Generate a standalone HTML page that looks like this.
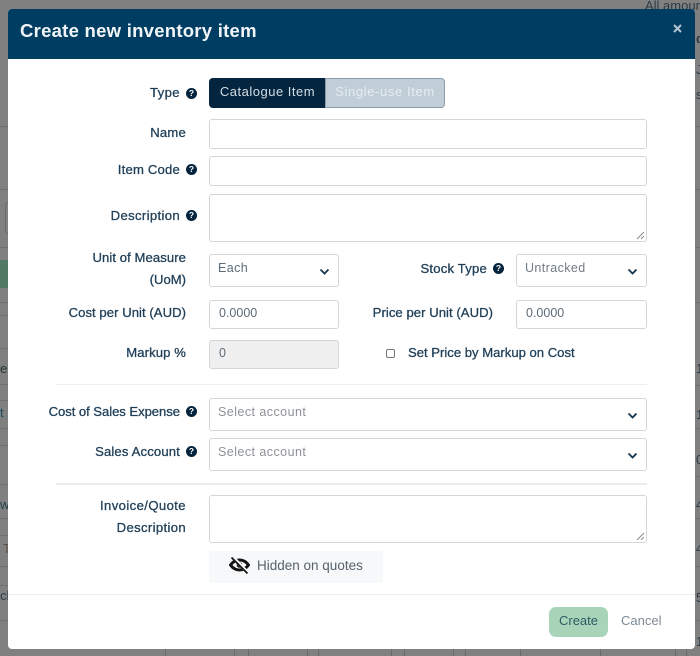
<!DOCTYPE html>
<html><head><meta charset="utf-8"><style>
html,body{margin:0;padding:0}
body{width:700px;height:656px;position:relative;overflow:hidden;background:#808080;font-family:"Liberation Sans",sans-serif;color:#1d3c55}
.a{position:absolute}
.bgl{position:absolute;height:1px;background:#6f6f6f}
.bgv{position:absolute;width:1px;background:#6a6a6a;top:649px;height:7px}
.bgt{position:absolute;font-size:13px;color:#2c3a45;white-space:nowrap}
#m{position:absolute;left:8px;top:9px;width:687px;height:640px;background:#fff;border-radius:4px;overflow:hidden}
#h{position:absolute;left:8px;top:9px;width:687px;height:50px;background:#003d63;border-radius:4px 4px 0 0}
.l{position:absolute;font-size:13.1px;line-height:21px;font-weight:400;color:#1f3f58;text-align:right;white-space:nowrap;-webkit-text-stroke:.3px #1f3f58}
.q{position:absolute;width:11px;height:11px;border-radius:50%;background:#04243d;color:#fff;font-size:8.500px;line-height:11px;font-weight:700;text-align:center}
.i{position:absolute;box-sizing:border-box;background:#fff;border:1px solid #d3d5d7;border-bottom-width:1.500px;border-radius:3px;font-size:12.500px;color:#5b6b78;white-space:nowrap}
.ph{color:#8e9296;letter-spacing:.45px}
.hr{position:absolute;height:1px;background:#ececec}
.g{position:absolute;right:1px;bottom:1px}
</style></head><body>
<div class="bgl" style="left:0;top:126px;width:8px"></div>
<div class="bgl" style="left:0;top:189px;width:8px"></div>
<div class="bgl" style="left:0;top:247px;width:8px"></div>
<div class="bgl" style="left:0;top:302px;width:8px"></div>
<div class="bgl" style="left:0;top:315px;width:8px"></div>
<div class="bgl" style="left:0;top:348px;width:8px"></div>
<div class="bgl" style="left:0;top:384px;width:8px"></div>
<div class="bgl" style="left:0;top:400px;width:8px"></div>
<div class="bgl" style="left:0;top:428px;width:8px"></div>
<div class="bgl" style="left:0;top:445px;width:8px"></div>
<div class="bgl" style="left:0;top:484px;width:8px"></div>
<div class="bgl" style="left:0;top:518px;width:8px"></div>
<div class="bgl" style="left:0;top:535px;width:8px"></div>
<div class="bgl" style="left:0;top:566px;width:8px"></div>
<div class="bgl" style="left:0;top:585px;width:8px"></div>
<div class="bgl" style="left:0;top:620px;width:8px"></div>
<div class="bgl" style="left:695px;top:126px;width:5px"></div>
<div class="bgl" style="left:695px;top:189px;width:5px"></div>
<div class="bgl" style="left:695px;top:247px;width:5px"></div>
<div class="bgl" style="left:695px;top:302px;width:5px"></div>
<div class="bgl" style="left:695px;top:385px;width:5px"></div>
<div class="bgl" style="left:695px;top:428px;width:5px"></div>
<div class="bgl" style="left:695px;top:476px;width:5px"></div>
<div class="bgl" style="left:695px;top:518px;width:5px"></div>
<div class="bgl" style="left:695px;top:566px;width:5px"></div>
<div class="bgl" style="left:695px;top:620px;width:5px"></div>
<div class="a" style="left:0;top:260px;width:8px;height:28px;background:#527a64"></div>
<div class="a" style="left:5px;top:202px;width:3px;height:32px;border:1px solid #6b6b6b;border-right:0;border-radius:3px 0 0 3px;box-sizing:border-box"></div>
<div class="bgt" style="left:0;top:361px;color:#233">e</div>
<div class="bgt" style="left:0;top:405px;color:#1d4a66">t</div>
<div class="bgt" style="left:0;top:497px;color:#24404f">w</div>
<div class="bgt" style="left:3px;top:541px;color:#5e5048">T</div>
<div class="bgt" style="left:0;top:588px">ch</div>
<div class="bgt" style="left:645px;top:-2px">All amoun</div>
<div class="bgt" style="left:696px;top:31px;font-weight:700">d</div>
<div class="bgt" style="left:696px;top:62px">J</div>
<div class="bgt" style="left:696px;top:87px">s</div>
<div class="bgt" style="left:696px;top:361px">1</div>
<div class="bgt" style="left:696px;top:407px">1</div>
<div class="bgt" style="left:696px;top:452px">0</div>
<div class="bgt" style="left:696px;top:497px">4</div>
<div class="bgt" style="left:696px;top:541px">4</div>
<div class="bgt" style="left:696px;top:590px">5</div>
<div class="bgt" style="left:696px;top:634px">1</div>
<div class="bgv" style="left:165px"></div><div class="bgv" style="left:234px"></div><div class="bgv" style="left:248px"></div><div class="bgv" style="left:307px"></div><div class="bgv" style="left:318px"></div><div class="bgv" style="left:391px"></div><div class="bgv" style="left:404px"></div><div class="bgv" style="left:453px"></div><div class="bgv" style="left:465px"></div><div class="bgv" style="left:520px"></div><div class="bgv" style="left:600px"></div><div class="bgv" style="left:675px"></div><div class="bgv" style="left:686px"></div>

<div id="m"></div>
<div id="h"></div>
<div class="a" style="left:20px;top:19px;font-size:18.500px;line-height:24px;font-weight:700;color:#f2f5f7;letter-spacing:.26px;white-space:nowrap">Create new inventory item</div>
<svg class="a" style="left:673px;top:24px" width="9" height="9" viewBox="0 0 9 9"><path d="M1 1L8 8M8 1L1 8" stroke="#b5c6d2" stroke-width="2"/></svg>

<div class="l" style="right:520px;top:82px;letter-spacing:.4px">Type</div><div class="q" style="left:186px;top:88px">?</div>
<div class="a" style="left:209px;top:78px;width:117px;height:30px;background:#04253f;border-radius:4px 0 0 4px;color:#d4dee5;font-size:13px;line-height:27px;text-align:center;letter-spacing:.5px">Catalogue Item</div>
<div class="a" style="left:325px;top:78px;width:120px;height:30px;box-sizing:border-box;background:#c0ced8;border:1px solid #8b9aa6;border-radius:0 4px 4px 0;color:#e6edf1;font-size:13px;line-height:25px;text-align:center;letter-spacing:.62px">Single-use Item</div>

<div class="l" style="right:514px;top:122px;letter-spacing:.2px">Name</div>
<div class="i" style="left:209px;top:119px;width:438px;height:30px"></div>

<div class="l" style="right:520px;top:159px;letter-spacing:.2px">Item Code</div><div class="q" style="left:186px;top:164px">?</div>
<div class="i" style="left:209px;top:156px;width:438px;height:30px"></div>

<div class="l" style="right:520px;top:205px;letter-spacing:.35px">Description</div><div class="q" style="left:186px;top:210px">?</div>
<div class="i" style="left:209px;top:194px;width:438px;height:48px"><svg class="g" width="9" height="9" viewBox="0 0 9 9"><path d="M1 8L8 1M5 8L8 5" stroke="#8a8a8a" stroke-width="1"/></svg></div>

<div class="l" style="right:514px;top:247px;letter-spacing:.07px">Unit of Measure</div>
<div class="l" style="right:514px;top:269px">(UoM)</div>
<div class="i" style="left:209px;top:254px;width:130px;height:33px;padding:3px 8px;line-height:20px;letter-spacing:.4px">Each<svg class="a" style="right:8px;top:13px" width="11" height="8" viewBox="0 0 11 8"><path d="M1.500 1.500L5.500 5.500L9.500 1.500" fill="none" stroke="#1c3b52" stroke-width="1.900"/></svg></div>

<div class="l" style="right:213px;top:258px;letter-spacing:.2px">Stock Type</div><div class="q" style="left:493px;top:263px">?</div>
<div class="i" style="left:516px;top:254px;width:131px;height:33px;padding:3px 8px;line-height:20px;color:#717c85;letter-spacing:.4px">Untracked<svg class="a" style="right:8px;top:13px" width="11" height="8" viewBox="0 0 11 8"><path d="M1.500 1.500L5.500 5.500L9.500 1.500" fill="none" stroke="#1c3b52" stroke-width="1.900"/></svg></div>

<div class="l" style="right:514px;top:302px;letter-spacing:.05px">Cost per Unit (AUD)</div>
<div class="i" style="left:209px;top:300px;width:130px;height:29px;padding:0 9px;line-height:25px">0.0000</div>
<div class="l" style="right:207px;top:302px;letter-spacing:.05px">Price per Unit (AUD)</div>
<div class="i" style="left:516px;top:300px;width:131px;height:29px;padding:0 9px;line-height:25px">0.0000</div>

<div class="l" style="right:514px;top:342px;letter-spacing:.1px">Markup %</div>
<div class="i" style="left:209px;top:340px;width:130px;height:29px;padding:0 9px;line-height:25px;background:#f0f0f0">0</div>
<div class="a" style="left:386px;top:349px;width:9px;height:9px;box-sizing:border-box;border:1px solid #767676;border-radius:2px;background:#fff"></div>
<div class="l" style="left:408px;top:342px;text-align:left">Set Price by Markup on Cost</div>

<div class="hr" style="left:56px;top:384px;width:591px"></div>

<div class="l" style="right:520px;top:401px;letter-spacing:-.05px">Cost of Sales Expense</div><div class="q" style="left:186px;top:406px">?</div>
<div class="i" style="left:209px;top:398px;width:438px;height:33px;padding:2px 8px;line-height:22px"><span class="ph">Select account</span><svg class="a" style="right:8px;top:13px" width="11" height="8" viewBox="0 0 11 8"><path d="M1.500 1.500L5.500 5.500L9.500 1.500" fill="none" stroke="#1c3b52" stroke-width="1.900"/></svg></div>

<div class="l" style="right:520px;top:441px;letter-spacing:.15px">Sales Account</div><div class="q" style="left:186px;top:446px">?</div>
<div class="i" style="left:209px;top:438px;width:438px;height:33px;padding:2px 8px;line-height:22px"><span class="ph">Select account</span><svg class="a" style="right:8px;top:13px" width="11" height="8" viewBox="0 0 11 8"><path d="M1.500 1.500L5.500 5.500L9.500 1.500" fill="none" stroke="#1c3b52" stroke-width="1.900"/></svg></div>

<div class="hr" style="left:56px;top:483px;width:591px;height:1.500px"></div>

<div class="l" style="right:514px;top:495px;letter-spacing:.4px">Invoice/Quote</div>
<div class="l" style="right:514px;top:517px;letter-spacing:.35px">Description</div>
<div class="i" style="left:209px;top:495px;width:438px;height:48px"><svg class="g" width="9" height="9" viewBox="0 0 9 9"><path d="M1 8L8 1M5 8L8 5" stroke="#8a8a8a" stroke-width="1"/></svg></div>

<div class="a" style="left:209px;top:551px;width:174px;height:32px;background:#f6f8fa;border-radius:3px"></div>
<svg class="a" style="left:229px;top:556px" width="21" height="19" viewBox="0 0 21 19"><path d="M1.500 9C4 5.500 7 4 10.500 4S17 5.500 19.500 9C17 12.500 14 14 10.500 14S4 12.500 1.500 9Z" fill="none" stroke="#141414" stroke-width="3"/><circle cx="10.500" cy="9" r="2.800" fill="#141414"/><path d="M3.500 1L19 17" stroke="#f6f8fa" stroke-width="3.500"/><path d="M2.500 1.500L18.500 17.500" stroke="#141414" stroke-width="1.800"/></svg>
<div class="a" style="left:257px;top:556px;font-size:13.500px;line-height:20px;color:#56626c;white-space:nowrap">Hidden on quotes</div>

<div class="hr" style="left:8px;top:594px;width:687px"></div>

<div class="a" style="left:549px;top:607px;width:59px;height:30px;background:#a8d5ba;border-radius:7px;color:#2f5a63;font-size:13px;line-height:27px;text-align:center">Create</div>
<div class="a" style="left:621px;top:611px;font-size:13px;line-height:19px;color:#7c8a96;white-space:nowrap">Cancel</div>
</body></html>
